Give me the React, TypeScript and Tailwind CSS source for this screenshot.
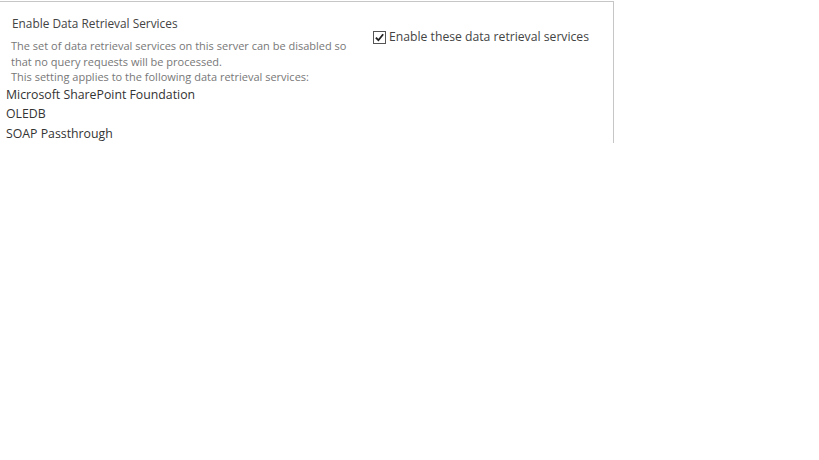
export default function App() {
  return (
    <div className="w-[819px] h-[460px] bg-white" style={{ fontFamily: '"Open Sans", "Liberation Sans", sans-serif' }}>
      <div className="mt-px w-[614px] h-[142px] overflow-hidden border-t border-r border-[#c6c6c6] flex">
        {/* left column */}
        <div className="w-[366px] shrink-0">
          <div className="pl-3 pt-[13px] text-[11.85px] leading-[16px] text-[#444]">Enable Data Retrieval Services</div>
          <div className="pl-[11px] pt-[7px] text-[11px] leading-[15.5px] text-[#777]">
            <div>The set of data retrieval services on this server can be disabled so</div>
            <div>that no query requests will be processed.</div>
            <div>This setting applies to the following data retrieval services:</div>
          </div>
          <div className="pl-[6px] text-[12.3px] leading-[19.5px] text-[#333]">
            <div>Microsoft SharePoint Foundation</div>
            <div>OLEDB</div>
            <div>SOAP Passthrough</div>
          </div>
        </div>
        {/* right column */}
        <div className="pl-[7px] pt-[27px]">
          <label className="flex items-center gap-[3px] text-[12.2px] leading-[16px] text-[#444]">
            <span className="w-[13px] h-[13px] border border-[#555] bg-white flex items-center justify-center">
              <svg viewBox="0 0 12 12" className="w-[11px] h-[11px]">
                <path d="M2 6.2 L4.8 9 L10 2.5" fill="none" stroke="#222" strokeWidth="2" />
              </svg>
            </span>
            Enable these data retrieval services
          </label>
        </div>
      </div>
    </div>
  )
}
